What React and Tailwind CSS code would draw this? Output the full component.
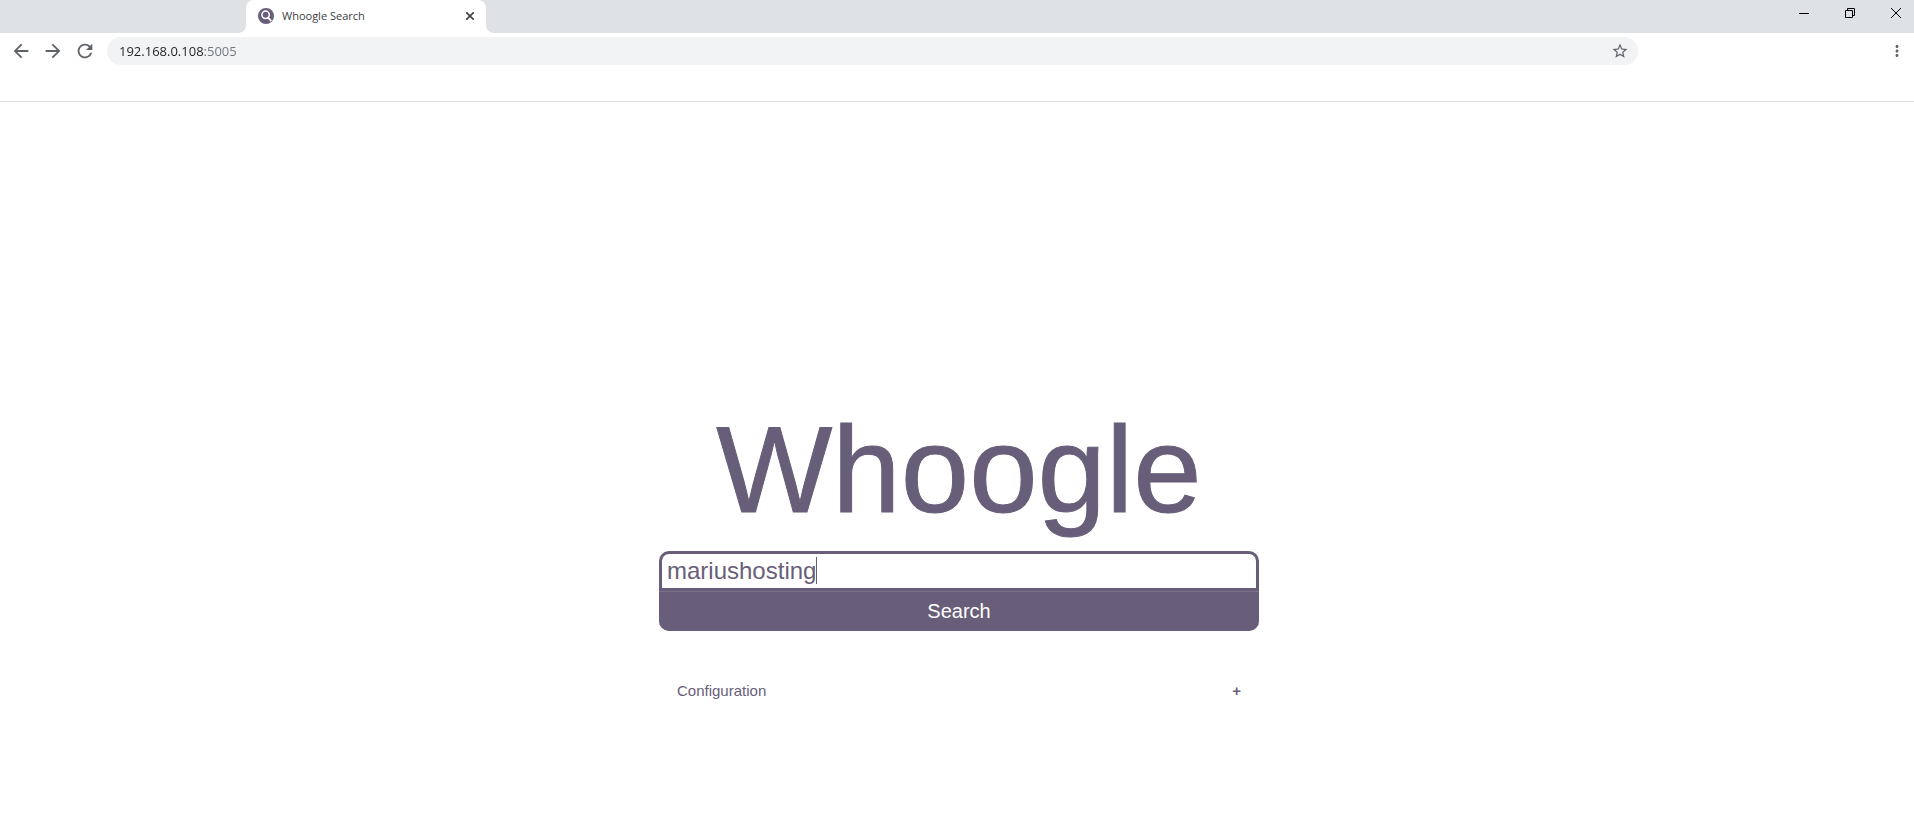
import { useState } from "react";
import { MdArrowBack, MdArrowForward, MdRefresh, MdStarBorder, MdMoreVert } from "react-icons/md";

const TabFlare = ({ flip }) => (
  <svg
    viewBox="0 0 8 8"
    className={flip ? "w-2 h-2 self-end -scale-x-100" : "w-2 h-2 self-end"}
    aria-hidden="true"
  >
    <path d="M8 0v8H0c4.4 0 8-3.6 8-8z" fill="#fff" />
  </svg>
);

const TabStrip = () => (
  <header className="flex h-[33px] bg-[#dee1e6]">
    <div className="w-[238px] shrink-0" />
    <TabFlare />
    <div className="flex w-60 shrink-0 items-center rounded-t-lg bg-white pl-3 pr-2 pb-px">
      <svg viewBox="0 0 16 16" className="h-4 w-4 shrink-0" aria-hidden="true">
        <circle cx="8" cy="8" r="8" fill="#685e79" />
        <circle cx="7.6" cy="6.8" r="3.7" fill="none" stroke="#fff" strokeWidth="1.5" />
        <path d="M10.2 9.6l2.6 3" stroke="#fff" strokeWidth="1.8" strokeLinecap="round" />
      </svg>
      <span className="ml-2 flex-1 text-[11px] leading-4 text-[#3c4043]">Whoogle Search</span>
      <button type="button" aria-label="Close tab" className="flex h-4 w-4 items-center justify-center">
        <svg viewBox="0 0 8 8" className="h-2 w-2">
          <path d="M.3.3l7.4 7.4M7.7.3L.3 7.7" stroke="#3c4043" strokeWidth="1.6" />
        </svg>
      </button>
    </div>
    <TabFlare flip />

    {/* WINDOW BUTTONS */}
    <div className="ml-auto mr-[13px] flex h-[26px] gap-9">
      <button type="button" aria-label="Minimize">
        <svg viewBox="0 0 10 10" className="h-[10px] w-[10px]" shapeRendering="crispEdges">
          <path d="M0 5h10v1H0z" fill="#000" />
        </svg>
      </button>
      <button type="button" aria-label="Restore">
        <svg viewBox="0 0 10 10" className="h-[10px] w-[10px]" fill="none" stroke="#000">
          <path d="M.5 2.5h7v7h-7zM2.5 2.5v-2h7v7h-2" />
        </svg>
      </button>
      <button type="button" aria-label="Close">
        <svg viewBox="0 0 10 10" className="h-[10px] w-[10px]">
          <path d="M0 0l10 10M10 0L0 10" stroke="#000" />
        </svg>
      </button>
    </div>
  </header>
);

const Toolbar = () => {
  const [url, setUrl] = useState("192.168.0.108:5005");

  return (
    <nav className="flex h-[69px] items-start border-b border-[#dadce0] pl-[10px] pr-2 pt-1 text-[#5f6368]">
      <div className="flex h-7 items-center gap-[10px]">
        <button type="button" aria-label="Back">
          <MdArrowBack size={22} />
        </button>
        <button type="button" aria-label="Forward">
          <MdArrowForward size={22} />
        </button>
        <button type="button" aria-label="Reload">
          <MdRefresh size={22} />
        </button>
      </div>
      <div className="ml-[11px] mr-[250px] flex h-7 flex-1 items-center rounded-full bg-[#f1f3f4] pl-3 pr-[9px]">
        <input
          type="text"
          aria-label="Address"
          value={url}
          onChange={(e) => setUrl(e.target.value)}
          className="min-w-0 flex-1 bg-[linear-gradient(90deg,#202124_84px,#70757a_84px)] bg-clip-text text-[13px] leading-5 text-transparent outline-none"
        />
        <button type="button" aria-label="Bookmark this page">
          <MdStarBorder size={18} />
        </button>
      </div>
      <button type="button" aria-label="Menu" className="flex h-7 items-center">
        <MdMoreVert size={18} />
      </button>
    </nav>
  );
};

const SearchForm = () => {
  const [query, setQuery] = useState("mariushosting");

  return (
    <form className="w-full" onSubmit={(e) => e.preventDefault()}>
      <div className="relative">
        <input
          type="text"
          aria-label="Search query"
          value={query}
          onChange={(e) => setQuery(e.target.value)}
          className="block h-10 w-full rounded-t-[10px] border-[3px] border-[#685e79] bg-white px-[5px] text-2xl text-[#685e79] outline-none"
        />
        {/* text cursor */}
        <span className="absolute left-[157px] top-[6px] h-[27px] w-px bg-[#685e79]" />
      </div>
      <button
        type="submit"
        className="block h-10 w-full rounded-b-[10px] border-y border-t-[#7b7289] border-b-[#685e79] bg-[#685e79] pb-px text-xl text-white"
      >
        Search
      </button>
    </form>
  );
};

const App = () => {
  return (
    <div className="min-h-screen bg-white font-['Open_Sans',sans-serif]">
      <TabStrip />
      <Toolbar />
      <main className="flex flex-col items-center pl-1 pt-[302px] font-['Liberation_Sans',Arial,sans-serif]">
        <div className="flex w-[600px] max-w-full flex-col items-center">
          <h1 className="mb-[15px] text-[123px] leading-[132px] text-[#685e79] [-webkit-text-stroke:1px_#685e79]">
            Whoogle
          </h1>
          <SearchForm />
          <button
            type="button"
            className="mt-12 flex w-full items-center justify-between px-[18px] text-[15px] leading-6 text-[#685e79]"
          >
            <span>Configuration</span>
            <span className="font-bold">+</span>
          </button>
        </div>
      </main>
    </div>
  );
};

export default App;
